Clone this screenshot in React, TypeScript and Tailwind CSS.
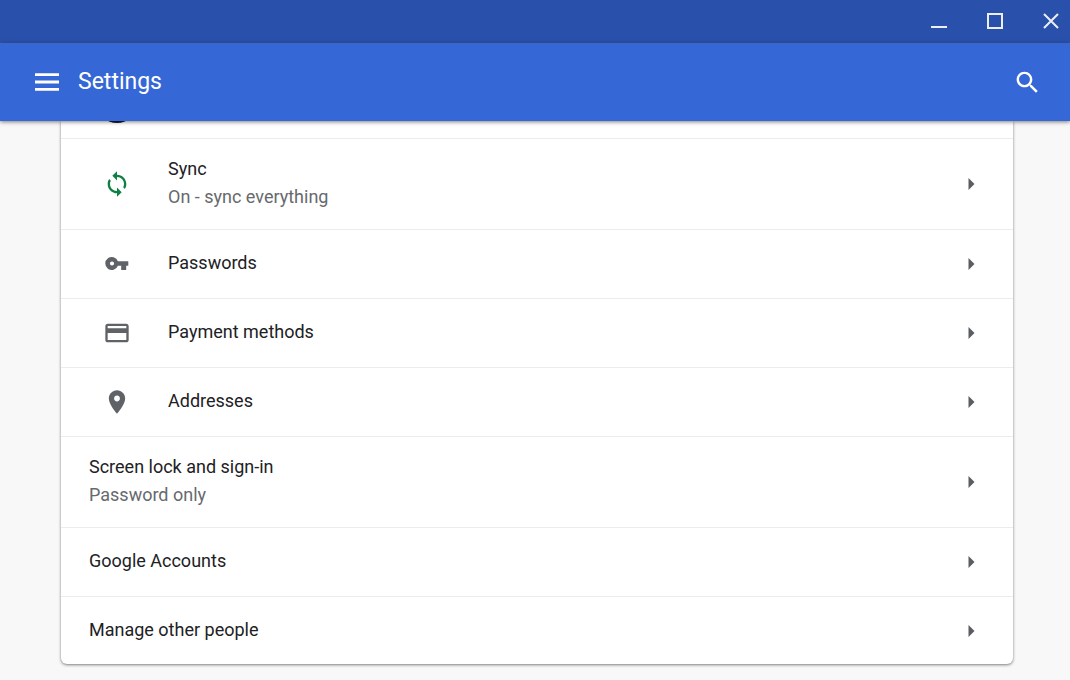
import type { ReactNode } from 'react';

type IconName = 'sync' | 'key' | 'card' | 'pin';

type Setting = {
  label: string;
  detail?: string;
  icon?: IconName;
};

const iconPaths: Record<IconName, string> = {
  sync: 'M12 4V1L8 5l4 4V6c3.31 0 6 2.69 6 6 0 1.01-.25 1.97-.7 2.8l1.46 1.46C19.54 15.03 20 13.57 20 12c0-4.42-3.58-8-8-8zm0 14c-3.31 0-6-2.69-6-6 0-1.01.25-1.97.7-2.8L5.24 7.74C4.46 8.97 4 10.43 4 12c0 4.42 3.58 8 8 8v3l4-4-4-4v3z',
  key: 'M12.9 9.3A6.5 6.5 0 1 0 12.9 13.7H16.2V18H21.2V13.7H23.3V9.3ZM7 9.4A2.1 2.1 0 1 1 7 13.6A2.1 2.1 0 1 1 7 9.4Z',
  card: 'M20 4H4c-1.11 0-1.99.89-1.99 2L2 18c0 1.11.89 2 2 2h16c1.11 0 2-.89 2-2V6c0-1.11-.89-2-2-2zm0 14H4v-6h16v6zm0-10H4V6h16v2z',
  pin: 'M12 2C8.13 2 5 5.13 5 9c0 5.25 7 13 7 13s7-7.75 7-13c0-3.87-3.13-7-7-7zm0 9.5c-1.38 0-2.5-1.12-2.5-2.5s1.12-2.5 2.5-2.5 2.5 1.12 2.5 2.5-1.12 2.5-2.5 2.5z',
};

const iconStyles: Record<IconName, string> = {
  sync: 'size-7 text-[#0f8043]',
  key: 'size-6 text-[#5f6368]',
  card: 'size-7 text-[#5f6368]',
  pin: 'size-7 text-[#5f6368]',
};

const settings: Setting[] = [
  { label: 'Sync', detail: 'On - sync everything', icon: 'sync' },
  { label: 'Passwords', icon: 'key' },
  { label: 'Payment methods', icon: 'card' },
  { label: 'Addresses', icon: 'pin' },
  { label: 'Screen lock and sign-in', detail: 'Password only' },
  { label: 'Google Accounts' },
  { label: 'Manage other people' },
];

function WindowButton({ label, children }: { label: string; children: ReactNode }) {
  return (
    <button type="button" aria-label={label} className="flex h-full w-14 items-center justify-center">
      <svg viewBox="0 0 18 18" className="size-[18px]" fill="none" stroke="#eceff1" strokeWidth="2" aria-hidden="true">
        {children}
      </svg>
    </button>
  );
}

function SettingRow({ label, detail, icon }: Setting) {
  return (
    <li className="border-b border-[#ececec] last:border-b-0 last:*:h-[67px]">
      <button
        type="button"
        className={`flex w-full items-center pr-[38px] pl-7 text-left ${detail ? 'h-[90px]' : 'h-[68px]'}`}
      >
        {icon && (
          <span className="mr-[23px] flex w-14 shrink-0 justify-center">
            <svg viewBox="0 0 24 24" className={iconStyles[icon]} fill="currentColor" fillRule="evenodd" aria-hidden="true">
              <path d={iconPaths[icon]} />
            </svg>
          </span>
        )}
        <span className="flex grow flex-col pb-0.5 text-[18px] leading-7">
          <span className="text-[#212124]">{label}</span>
          {detail && <span className="text-[#67696d]">{detail}</span>}
        </span>
        <svg viewBox="0 0 7 12" className="h-3 w-[7px] shrink-0" fill="#5a5e63" aria-hidden="true">
          <path d="M0.5 0L6.5 6L0.5 12Z" />
        </svg>
      </button>
    </li>
  );
}

export default function App() {
  return (
    <div className="flex min-h-screen flex-col bg-[#f8f8f9] font-[Roboto,sans-serif]">
      <div className="flex h-[43px] shrink-0 justify-end overflow-hidden border-b border-[#38549c] bg-[#2951ac]">
        <div className="-mr-[9px] flex">
          <WindowButton label="Minimize">
            <path d="M1 15H17" />
          </WindowButton>
          <WindowButton label="Maximize">
            <path d="M2 2H16V16H2Z" />
          </WindowButton>
          <WindowButton label="Close">
            <path d="M2 2L16 16M16 2L2 16" />
          </WindowButton>
        </div>
      </div>

      <header className="relative z-10 flex h-[78px] shrink-0 items-center bg-[#3667d6] pr-7 pl-[31px] text-white shadow-[0_1px_4px_rgba(0,0,0,0.5)]">
        <button type="button" aria-label="Main menu">
          <svg viewBox="0 0 32 32" className="size-8" fill="currentColor" aria-hidden="true">
            <path d="M4 7.2H28V10H4ZM4 14.6H28V17.4H4ZM4 22H28V24.8H4Z" />
          </svg>
        </button>
        <h1 className="ml-[15px] grow text-[23px] leading-8">Settings</h1>
        <button type="button" aria-label="Search settings">
          <svg viewBox="0 0 24 24" className="size-[29px]" fill="currentColor" aria-hidden="true">
            <path d="M15.5 14h-.79l-.28-.27C15.41 12.59 16 11.11 16 9.5 16 5.91 13.09 3 9.5 3S3 5.91 3 9.5 5.91 16 9.5 16c1.61 0 3.09-.59 4.23-1.57l.27.28v.79l5 4.99L20.49 19l-4.99-5zm-6 0C7.01 14 5 11.99 5 9.5S7.01 5 9.5 5 14 7.01 14 9.5 11.99 14 9.5 14z" />
          </svg>
        </button>
      </header>

      <main className="grow pr-[57px] pb-4 pl-[61px]">
        <section className="rounded-b-md bg-white shadow-[0_1px_3px_rgba(0,0,0,0.5)]">
          <div className="flex h-[18px] items-end overflow-hidden border-b border-[#ececec] pb-[15px] pl-9">
            <span className="size-10 shrink-0 rounded-full bg-[#111a3c]" />
          </div>
          <ul>
            {settings.map((setting) => (
              <SettingRow key={setting.label} {...setting} />
            ))}
          </ul>
        </section>
      </main>
    </div>
  );
}
